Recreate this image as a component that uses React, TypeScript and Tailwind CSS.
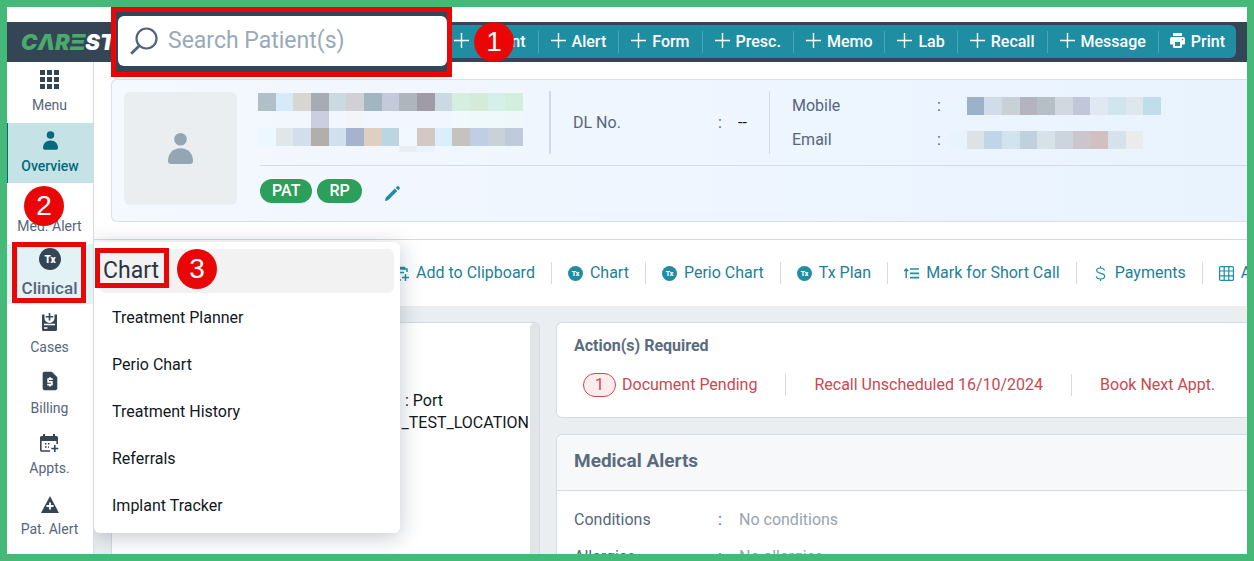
import type { ReactNode } from "react";
import { MdRequestPage } from "react-icons/md";
import { clsx } from "clsx";

interface IconProps {
  className?: string;
}

function PlusIcon({ className }: IconProps) {
  return (
    <svg viewBox="0 0 15 15" className={className} fill="none" stroke="currentColor" strokeWidth="1.4">
      <path d="M7.5 0v15M0 7.5h15" />
    </svg>
  );
}

function PrinterIcon({ className }: IconProps) {
  return (
    <svg viewBox="0 0 15 15" className={className} fill="currentColor">
      <rect x="3" y="0" width="9" height="3" rx="0.6" />
      <path
        fillRule="evenodd"
        d="M2 4h11a2 2 0 0 1 2 2v4.5a1 1 0 0 1-1 1h-2V14a1 1 0 0 1-1 1H4a1 1 0 0 1-1-1v-2.500H1a1 1 0 0 1-1-1V6a2 2 0 0 1 2-2Zm3 5v4h5V9H5Zm7-3v1.200h1.200V6H12Z"
      />
    </svg>
  );
}

function GridIcon({ className }: IconProps) {
  return (
    <svg viewBox="0 0 19 19" className={className} fill="currentColor">
      {[0, 7, 14].map((y) =>
        [0, 7, 14].map((x) => <rect key={`${x}-${y}`} x={x} y={y} width="5" height="5" />)
      )}
    </svg>
  );
}

function PersonIcon({ className }: IconProps) {
  return (
    <svg viewBox="0 0 25 31" className={className} fill="currentColor">
      <circle cx="12.500" cy="6.300" r="6.300" />
      <path d="M0 28C0 20.500 5 15.300 12.500 15.300S25 20.500 25 28a3 3 0 0 1-3 3H3a3 3 0 0 1-3-3Z" />
    </svg>
  );
}

function TxIcon({ className }: IconProps) {
  return (
    <svg viewBox="0 0 22 22" className={className}>
      <circle cx="11" cy="11" r="11" fill="currentColor" />
      <text x="11" y="14.500" textAnchor="middle" fontSize="10" fontWeight="900" fill="white" fontFamily="Roboto, sans-serif">
        Tx
      </text>
    </svg>
  );
}

function CaseIcon({ className }: IconProps) {
  return (
    <svg viewBox="0 0 15 18" className={className}>
      <path fill="currentColor" d="M0 1.500h2.500v3.500a5 5 0 0 0 10 0V1.500H15v15a1.500 1.500 0 0 1-1.500 1.500h-12A1.500 1.500 0 0 1 0 16.500Z" />
      <path fill="none" stroke="currentColor" strokeWidth="1.600" d="M7.500 0v7.500M3.700 3.800h7.600" />
      <path fill="none" stroke="white" strokeWidth="1.400" d="M2 11.500h11M2 15h3.500" />
    </svg>
  );
}

function CalendarPlusIcon({ className }: IconProps) {
  return (
    <svg viewBox="0 0 19 18" className={className} fill="none" stroke="currentColor" strokeWidth="1.600">
      <path fill="currentColor" stroke="none" d="M0 3.500A1.500 1.500 0 0 1 1.500 2H3V0h2v2h8V0h2v2h1.500A1.500 1.500 0 0 1 18 3.500V7H0Z" />
      <path d="M.8 6v10a1 1 0 0 0 1 1H10M17.200 6v4M14.800 11v7M11.300 14.500h7" />
      <path strokeDasharray="1.500 1.500" d="M5 9.800h6M5 13h4" />
    </svg>
  );
}

function TrianglePlusIcon({ className }: IconProps) {
  return (
    <svg viewBox="0 0 18 17" className={className}>
      <path fill="currentColor" d="M9 0l9 17H0Z" />
      <path fill="none" stroke="white" strokeWidth="1.800" d="M9 6.500v7M5.500 10h7" />
    </svg>
  );
}

function ClipboardPlusIcon({ className }: IconProps) {
  return (
    <svg viewBox="0 0 15 15" className={className} fill="none" stroke="currentColor" strokeWidth="1.500">
      <path d="M7 14H2V3h11v3M4.500 4V1.500h6V4M5 6.500h5M11.500 8v7M8 11.500h7" />
    </svg>
  );
}

function ShortCallIcon({ className }: IconProps) {
  return (
    <svg viewBox="0 0 15 15" className={className} fill="none" stroke="currentColor" strokeWidth="1.700">
      <path strokeWidth="1.400" d="M2.200 12V3M.3 5l1.900-2 1.900 2" />
      <path d="M6 3h9M6 7.300h9M6 11.600h9" />
    </svg>
  );
}

function DollarIcon({ className }: IconProps) {
  return (
    <svg viewBox="0 0 15 15" className={className} fill="none" stroke="currentColor" strokeWidth="1.200">
      <path d="M11.500 4.500C11.200 3 9.800 2 7.500 2S3.700 3 3.700 4.600c0 3.700 8 1.700 8 5.500 0 1.800-1.700 2.900-4.100 2.900S3.500 12 3.300 10.200M7.500 0v2M7.500 13v2" />
    </svg>
  );
}

function TableIcon({ className }: IconProps) {
  return (
    <svg viewBox="0 0 15 15" className={className} fill="none" stroke="currentColor" strokeWidth="1.200">
      <rect x=".6" y=".6" width="13.800" height="13.800" rx="1" />
      <path d="M.6 5h13.800M.6 9.800h13.800M5.200.6v13.800M9.800.6v13.800" />
    </svg>
  );
}

function PencilIcon({ className }: IconProps) {
  return (
    <svg viewBox="0 0 15 15" className={className} fill="currentColor">
      <path d="M0 15l.6-3.200L9.800 2.600l2.500 2.500-9.200 9.200ZM10.700 1.700L12.200.3a1 1 0 0 1 1.400 0l1.100 1.100a1 1 0 0 1 0 1.400l-1.500 1.400Z" />
    </svg>
  );
}

function SearchIcon({ className }: IconProps) {
  return (
    <svg viewBox="0 0 28 28" className={className} fill="none" stroke="currentColor">
      <circle cx="16.500" cy="11.500" r="10" strokeWidth="2.200" />
      <path strokeWidth="2.800" d="M9.500 18.500L1.200 26.800" />
    </svg>
  );
}

interface MosaicProps {
  rows: { y: number; height: number; cells: (string | null)[] }[];
  className: string;
  columns: number;
  height: number;
}

// Redacted values are drawn as coarse colour cells
function Mosaic({ rows, className, columns, height }: MosaicProps) {
  return (
    <svg
      viewBox={`0 0 ${columns * 10} ${height}`}
      preserveAspectRatio="none"
      shapeRendering="crispEdges"
      className={className}
      aria-hidden="true"
    >
      {rows.map((row) =>
        row.cells.map((fill, idx) =>
          fill ? <rect key={`${row.y}-${idx}`} x={idx * 10} y={row.y} width="10" height={row.height} fill={fill} /> : null
        )
      )}
    </svg>
  );
}

const nameRows = [
  {
    y: 0,
    height: 18,
    cells: ["#b0bfc8", "#d7eaf9", "#d8d6d3", "#a7abb3", "#cbdae0", "#d0d0d5", "#a2b6c1", "#c5cadb", "#aeb5bc", "#9f9ca7", "#cbd9e2", "#d4eee0", "#d3ebd7", "#d5f0e9", "#d2eedd"],
  },
  {
    y: 18,
    height: 17,
    cells: [null, null, null, "#cacfdf", null, "#f4f5f8", null, null, null, null, null, "#f0f9fb", "#eff9fa", "#eff9fb", "#eef8f9"],
  },
  {
    y: 35,
    height: 18,
    cells: ["#ebf8ff", "#e0e7e9", "#d3deed", "#b3aea9", "#d0e0ee", "#a6b3ce", "#ddd0c0", "#bcd5e3", "#f1f9ff", "#d3c8c3", "#dbeefb", "#c4c3be", "#bfcde5", "#c9d1da", "#c0cadd"],
  },
  {
    y: 53,
    height: 6,
    cells: [null, null, null, null, null, null, null, null, "#e9eef2", "#eaf4fe", null, "#eef6ff"],
  },
];

const mobileRows = [
  {
    y: 0,
    height: 18,
    cells: ["#eaf5fe", "#9db2c8", "#d0dde9", "#c9d1d6", "#b3b4c0", "#b6bec6", "#d1d8e0", "#c1c6d8", "#e0e8f3", "#d1e5ee", "#dfe6ed", "#bfddea"],
  },
];

const emailRows = [
  {
    y: 0,
    height: 18,
    cells: ["#e8f4fd", "#dde2e4", "#c0d6e8", "#d0e3ef", "#c1d0dd", "#d6e2e8", "#ccd4de", "#cbc6cc", "#d0c0c2", "#d3e2eb", "#eaecec", null],
  },
];

const createActions = ["Patient", "Alert", "Form", "Presc.", "Memo", "Lab", "Recall", "Message"];

const navItems = [
  { label: "Menu", icon: <GridIcon className="size-[19px]" /> },
  { label: "Overview", icon: <PersonIcon className="h-[19px] w-[15px]" />, active: true },
  { label: "Med. Alert", icon: <TrianglePlusIcon className="size-[18px]" /> },
  { label: "Clinical", icon: <TxIcon className="size-[22px]" />, open: true },
  { label: "Cases", icon: <CaseIcon className="h-[18px] w-[15px]" /> },
  { label: "Billing", icon: <MdRequestPage className="size-[22px]" /> },
  { label: "Appts.", icon: <CalendarPlusIcon className="h-[18px] w-[19px]" /> },
  { label: "Pat. Alert", icon: <TrianglePlusIcon className="h-[17px] w-[18px]" /> },
];

const quickActions = [
  { label: "Add to Clipboard", icon: <ClipboardPlusIcon className="size-[15px]" /> },
  { label: "Chart", icon: <TxIcon className="size-[15px]" /> },
  { label: "Perio Chart", icon: <TxIcon className="size-[15px]" /> },
  { label: "Tx Plan", icon: <TxIcon className="size-[15px]" /> },
  { label: "Mark for Short Call", icon: <ShortCallIcon className="size-[15px]" /> },
  { label: "Payments", icon: <DollarIcon className="size-[15px]" /> },
  { label: "Appts.", icon: <TableIcon className="size-[15px]" /> },
];

const clinicalMenu = ["Treatment Planner", "Perio Chart", "Treatment History", "Referrals", "Implant Tracker"];

function StepBadge({ children, className }: { children: ReactNode; className: string }) {
  return (
    <span
      className={clsx(
        "absolute z-30 flex size-10 items-center justify-center rounded-full bg-[#ea0606] font-['Liberation_Sans',sans-serif] text-[28px] leading-none text-white",
        className
      )}
    >
      {children}
    </span>
  );
}

function Header() {
  return (
    <header className="relative flex h-10 shrink-0 items-center bg-[#344555] pr-[11px]">
      <a
        href="#"
        aria-label="CareStack"
        className="pl-3.5 font-[Inter,sans-serif] text-[22px] leading-none font-black whitespace-nowrap text-[#4aa96c] italic"
      >
        CΛRΞ<span className="text-white">STACK</span>
      </a>
      <div className="mb-px ml-auto flex h-[33px] items-center rounded-md bg-[#1f8ea3] pt-px text-base font-medium text-white">
        {createActions.map((action) => (
          <button key={action} className="flex h-[22px] items-center gap-1.5 border-r border-[#4aa5b5] px-3 whitespace-nowrap">
            <PlusIcon className="mb-1 size-[15px]" />
            {action}
          </button>
        ))}
        <button className="flex h-[22px] items-center gap-1.5 px-[11px]">
          <PrinterIcon className="mb-1 size-[15px]" />
          Print
        </button>
      </div>

      {/* Enlarged patient search */}
      <div className="absolute -top-[15px] left-[104px] z-20 h-[70px] w-[341px] border-[5px] border-[#ea0606] bg-[#344555] pt-1 pl-0.5">
        <label className="flex h-[50px] items-center gap-2.5 rounded-md bg-white pl-3 text-[#52647a]">
          <SearchIcon className="size-7" />
          <input
            type="text"
            aria-label="Search Patient(s)"
            placeholder="Search Patient(s)"
            className="min-w-0 flex-1 text-[23px] outline-none placeholder:text-[#9aa9b8]"
          />
        </label>
      </div>
      <StepBadge className="top-0 left-[467px]">1</StepBadge>
    </header>
  );
}

function Sidebar() {
  return (
    <nav className="relative z-20 flex w-[87px] shrink-0 flex-col border-r border-[#d5dae4] bg-white pb-2">
      {navItems.map((item) => (
        <button
          key={item.label}
          className={clsx(
            "relative flex w-full flex-1 flex-col items-center pr-px text-sm",
            item.active && "border-l border-[#046a7c] bg-[#c5e2e7] font-medium text-[#046a7c]",
            item.open && "bg-[#e3f2f5] text-[#344555]",
            !item.active && !item.open && "text-[#344555]"
          )}
        >
          <span className={clsx("flex shrink-0 items-end justify-center", item.open ? "h-[26px]" : "h-[27px]")}>{item.icon}</span>
          <span
            className={clsx(
              "mt-1.5 whitespace-nowrap",
              item.open && "text-[17px] font-medium",
              !item.active && "text-[#56667a]"
            )}
          >
            {item.label}
          </span>
          {item.open && <span className="absolute -top-0.5 left-[5px] h-[61px] w-[74px] border-[5px] border-[#ea0606]" />}
        </button>
      ))}
      <StepBadge className="top-[124px] left-[17px]">2</StepBadge>
    </nav>
  );
}

function ClinicalMenu() {
  return (
    <div className="absolute top-[180px] left-0 z-10 w-[306px] rounded-r-md rounded-bl-md bg-white px-1.5 pt-[7px] pb-[5px] shadow-[0_4px_22px_rgba(40,55,75,0.28)]">
      <ul className="flex flex-col gap-[3px] text-base text-[#111820]">
        <li>
          <button className="flex h-11 w-full items-center rounded-md bg-[#f2f2f2] pl-[3px] text-[23px] text-[#2c3542]">
            Chart
          </button>
        </li>
        {clinicalMenu.map((label) => (
          <li key={label}>
            <button className="flex h-11 w-full items-center px-3">{label}</button>
          </li>
        ))}
      </ul>
      <span className="absolute top-1.5 left-px h-10 w-[74px] border-[5px] border-[#ea0606]" />
      <StepBadge className="top-[7px] left-[83px]">3</StepBadge>
    </div>
  );
}

function Field({ label, children }: { label: string; children: ReactNode }) {
  return (
    <div className="flex h-[34px] shrink-0 items-center">
      <dt className="w-[145px] text-[#56667a]">{label}</dt>
      <dd className="flex items-center">
        <span className="w-3 text-[#56667a]">:</span>
        {children}
      </dd>
    </div>
  );
}

function PatientCard() {
  return (
    <section className="mt-[17px] ml-[17px] flex h-[143px] shrink-0 rounded-l-md border border-r-0 border-[#d5e0f3] bg-linear-to-r from-[#f4f8ff] via-[#eff6ff] to-[#e8f3fe] pl-3">
      <div className="mt-3 flex size-[113px] shrink-0 items-center justify-center rounded-md bg-[#eaeef1] text-[#94a5b3]">
        <PersonIcon className="h-[31px] w-[25px]" />
      </div>
      <div className="ml-[21px] min-w-0 flex-1">
        <div className="flex h-[85px] items-center">
          <Mosaic rows={nameRows} columns={15} height={59} className="h-[59px] w-[265px] shrink-0" />
          <div className="ml-[26px] h-[63px] border-l-2 border-[#d3dbe6] pl-[22px]">
            <dl className="flex h-full w-[196px] flex-col justify-center">
              <Field label="DL No.">
                <span className="pl-2 text-[#111820]">--</span>
              </Field>
            </dl>
          </div>
          <div className="h-[63px] border-l border-[#d3dbe6] pl-[22px]">
            <dl className="flex h-full flex-col justify-center">
              <Field label="Mobile">
                <Mosaic rows={mobileRows} columns={12} height={18} className="h-[18px] w-[212px]" />
              </Field>
              <Field label="Email">
                <Mosaic rows={emailRows} columns={12} height={18} className="h-[18px] w-[212px]" />
              </Field>
            </dl>
          </div>
        </div>
        <div className="ml-0.5 flex items-center gap-[5px] border-t border-[#d3dbe6] pt-[13px]">
          <span className="flex h-6 items-center rounded-full bg-[#2c9f5a] px-3 text-base font-medium text-white">PAT</span>
          <span className="flex h-6 items-center rounded-full bg-[#2c9f5a] px-3 text-base font-medium text-white">RP</span>
          <button aria-label="Edit tags" className="mt-1 ml-[18px] text-[#1f8ea3]">
            <PencilIcon className="size-[15px]" />
          </button>
        </div>
      </div>
    </section>
  );
}

function QuickActions() {
  return (
    <div className="mt-[17px] flex h-[67px] shrink-0 items-center border-t border-[#d3dbe6] pl-[284px] text-base text-[#1f8095]">
      {quickActions.map((action) => (
        <button
          key={action.label}
          className="flex h-[22px] shrink-0 items-center gap-[7px] border-r border-[#d3d9e6] px-4 whitespace-nowrap"
        >
          <span className="text-[#1f8ea3]">{action.icon}</span>
          {action.label}
        </button>
      ))}
    </div>
  );
}

function ActionsRequired() {
  return (
    <section className="h-24 shrink-0 rounded-l-md border border-r-0 border-[#d3dbe6] bg-white pt-[11px] pl-[17px]">
      <h2 className="text-base font-bold text-[#5b6b7d]">Action(s) Required</h2>
      <div className="mt-[15px] flex items-center pl-[9px] whitespace-nowrap text-[#ca4850]">
        <a href="#" className="flex items-center gap-1.5">
          <span className="flex h-6 w-[33px] items-center justify-center rounded-full border border-[#ca4850] bg-[#fdeced]">1</span>
          Document Pending
        </a>
        <a href="#" className="ml-7 border-l border-[#d3d9e6] pl-7 leading-[22px]">
          Recall Unscheduled 16/10/2024
        </a>
        <a href="#" className="ml-7 border-l border-[#d3d9e6] pl-7 leading-[22px]">
          Book Next Appt.
        </a>
      </div>
    </section>
  );
}

function MedicalAlerts() {
  return (
    <section className="flex-1 rounded-tl-md border border-r-0 border-b-0 border-[#d3dbe6] bg-white">
      <h2 className="flex h-14 items-center rounded-tl-md border-b border-[#d3dbe6] bg-[#f6f8fa] pb-0.5 pl-[17px] text-[19px] font-bold text-[#5b6b7d]">
        Medical Alerts
      </h2>
      <dl className="pt-2.5 pl-[17px]">
        {["Conditions", "Allergies"].map((label) => (
          <div key={label} className="flex h-[37px] items-center">
            <dt className="w-[144px] text-[#56667a]">{label}</dt>
            <dd className="text-[#97a4b2]">
              <span className="inline-block w-[21px] text-[#56667a]">:</span>
              No {label.toLowerCase()}
            </dd>
          </div>
        ))}
      </dl>
    </section>
  );
}

export default function App() {
  return (
    <div className="flex h-screen flex-col overflow-hidden border-[7px] border-[#45b978] bg-white pt-[15px] font-[Roboto,sans-serif]">
      <Header />
      <div className="flex min-h-0 flex-1">
        <Sidebar />
        <main className="relative flex min-w-0 flex-1 flex-col">
          <PatientCard />
          <QuickActions />
          <div className="flex min-h-0 flex-1 gap-4 overflow-hidden bg-[#eaeef1] pt-4 pl-[17px]">
            <section className="flex w-[429px] shrink-0 rounded-t-md border border-b-0 border-[#d3dbe6] bg-white">
              <div className="flex-1 pt-[67px] pr-px text-right leading-[22px] text-[#111820]">
                <p className="pr-[86px]">: Port</p>
                <p>_TEST_LOCATION</p>
              </div>
              <div className="w-[9px] rounded-t-md bg-[#e1e5e8]" />
            </section>
            <div className="flex min-w-0 flex-1 flex-col gap-4">
              <ActionsRequired />
              <MedicalAlerts />
            </div>
          </div>
          <ClinicalMenu />
        </main>
      </div>
    </div>
  );
}
